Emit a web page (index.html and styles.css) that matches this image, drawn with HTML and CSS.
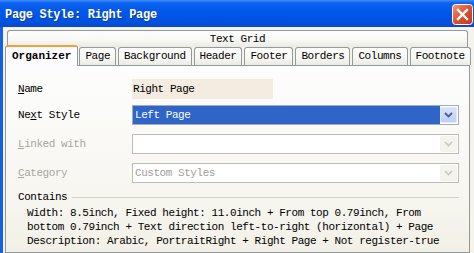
FILE: index.html
```html
<!DOCTYPE html>
<html lang="en">
<head>
    <meta charset="UTF-8">
    <meta name="viewport" content="width=device-width, initial-scale=1.0">
    <title>Page Style: Right Page</title>
    <link rel="stylesheet" href="styles.css">
</head>
<body>
    <div class="window">
        <div class="titlebar">
            <span class="title">Page Style: Right Page</span>
            <span class="close">
                <svg width="21" height="21" viewBox="0 0 21 21">
                    <defs>
                        <linearGradient id="cg" x1="0" y1="0" x2="1" y2="1">
                            <stop offset="0" stop-color="#f29a7c"/>
                            <stop offset="0.5" stop-color="#e0502a"/>
                            <stop offset="1" stop-color="#c4341a"/>
                        </linearGradient>
                    </defs>
                    <rect x="0.5" y="0.5" width="20" height="20" rx="3" fill="url(#cg)" stroke="#fff"/>
                    <path d="M6 6 L15 15 M15 6 L6 15" stroke="#fff" stroke-width="2.4" stroke-linecap="square"/>
                </svg>
            </span>
        </div>
        <div class="body">
            <div class="tabrow back">
                <span class="tab wide">Text Grid</span>
            </div>
            <div class="tabrow front">
                <span class="tab active">Organizer</span>
                <span class="tab">Page</span>
                <span class="tab">Background</span>
                <span class="tab">Header</span>
                <span class="tab">Footer</span>
                <span class="tab">Borders</span>
                <span class="tab">Columns</span>
                <span class="tab">Footnote</span>
            </div>
            <div class="panel">
                <div class="row first">
                    <span class="label"><u>N</u>ame</span>
                    <span class="namebox">Right Page</span>
                </div>
                <div class="row">
                    <span class="label">Ne<u>x</u>t Style</span>
                    <div class="select">
                        <span class="value picked">Left Page</span>
                        <span class="drop">
                            <svg width="9" height="6" viewBox="0 0 9 6"><path d="M1 1 L4.5 4.5 L8 1" fill="none" stroke="#4d6185" stroke-width="1.8"/></svg>
                        </span>
                    </div>
                </div>
                <div class="row">
                    <span class="label off"><u>L</u>inked with</span>
                    <div class="select disabled">
                        <span class="value"></span>
                        <span class="drop">
                            <svg width="9" height="6" viewBox="0 0 9 6"><path d="M1 1 L4.5 4.5 L8 1" fill="none" stroke="#c9c7ba" stroke-width="1.6"/></svg>
                        </span>
                    </div>
                </div>
                <div class="row">
                    <span class="label off"><u>C</u>ategory</span>
                    <div class="select disabled">
                        <span class="value">Custom Styles</span>
                        <span class="drop">
                            <svg width="9" height="6" viewBox="0 0 9 6"><path d="M1 1 L4.5 4.5 L8 1" fill="none" stroke="#c9c7ba" stroke-width="1.6"/></svg>
                        </span>
                    </div>
                </div>
                <div class="contains">
                    <span>Contains</span>
                    <span class="rule"></span>
                </div>
                <p class="desc">Width: 8.5inch, Fixed height: 11.0inch + From top 0.79inch, From<br>bottom 0.79inch + Text direction left-to-right (horizontal) + Page<br>Description: Arabic, PortraitRight + Right Page + Not register-true</p>
            </div>
        </div>
    </div>
</body>
</html>
```

FILE: styles.css
```css
body{
    margin: 0;
    padding: 0;
    background-color: #f1efe5;
}
.window{
    width: 474px;
    height: 253px;
    overflow: hidden;
    display: flex;
    flex-direction: column;
    font-family: "Liberation Mono", "DejaVu Sans Mono", monospace;
    font-size: 11px;
    letter-spacing: -0.45px;
    color: #000;
}
.titlebar{
    height: 27px;
    flex: none;
    display: flex;
    align-items: center;
    padding-top: 2px;
    box-sizing: border-box;
    background: linear-gradient(#3b8ffb 0, #0f62f0 3px, #0058ea 40%, #0052e0 80%, #0a49cc 100%);
}
.title{
    padding-left: 5px;
    color: #fff;
    font-size: 12px;
    font-weight: bold;
    letter-spacing: -0.3px;
    text-shadow: 1px 1px 0 #0b3a9c;
}
.close{
    margin-left: auto;
    margin-right: 1px;
    height: 21px;
}
.body{
    flex: 1;
    display: flex;
    flex-direction: column;
    border-left: 3px solid #1560e4;
    padding: 3px 4px 0 2px;
    background-color: #f5f4ec;
}
.tabrow{
    display: flex;
    height: 17px;
}
.back{
    padding: 0 2px;
}
.front{
    height: 18px;
    align-items: flex-end;
    padding-left: 2px;
    gap: 2px;
}
.tab{
    box-sizing: border-box;
    height: 18px;
    padding: 0 5px;
    border: 1px solid #919b9c;
    border-bottom: none;
    border-radius: 3px 3px 0 0;
    background: linear-gradient(#fefefe, #f7f7f3 60%, #ebeae4);
    line-height: 17px;
    white-space: nowrap;
}
.wide{
    flex: 1;
    height: 17px;
    text-align: center;
    line-height: 16px;
}
.active{
    position: relative;
    z-index: 1;
    height: 21px;
    margin: 0 -1px -1px -2px;
    padding: 0 6px;
    font-weight: bold;
    letter-spacing: 0;
    background: #fcfcfe;
    border-top: 2px solid #f0a33c;
    line-height: 18px;
}
.panel{
    flex: 1;
    border: 1px solid #919b9c;
    padding: 13px 10px 0 12px;
    background: linear-gradient(#fdfdfd, #f7f6f0 70%, #f2f0e6);
}
.row{
    display: flex;
    align-items: center;
    height: 20px;
    margin-top: 9px;
}
.row.first{
    margin-top: 0;
    margin-bottom: -3px;
}
.label{
    width: 114px;
    flex: none;
}
.label.off{
    color: #a8a7a0;
}
.namebox{
    width: 140px;
    height: 20px;
    line-height: 20px;
    padding-left: 1px;
    background-color: #f4ece0;
}
.select{
    flex: 1;
    height: 20px;
    box-sizing: border-box;
    display: flex;
    border: 1px solid #a5acb5;
    background-color: #fff;
    padding: 1px 1px 1px 0;
}
.value{
    flex: 1;
    padding-left: 2px;
    line-height: 16px;
}
.value.picked{
    background-color: #2f64c8;
    color: #fff;
    margin-top: -1px;
    margin-bottom: -1px;
    line-height: 18px;
}
.disabled{
    border-color: #bdbcb6;
}
.disabled .value{
    color: #a0a09a;
}
.drop{
    width: 17px;
    display: flex;
    align-items: center;
    justify-content: center;
    box-sizing: border-box;
    border: 1px solid #dfe8fb;
    border-radius: 2px;
    background: linear-gradient(#d6e2fd, #bdd0f8);
}
.disabled .drop{
    border-color: #f3f2ec;
    background: #f4f3ee;
}
.contains{
    display: flex;
    align-items: center;
    height: 14px;
    margin-top: 7px;
}
.rule{
    flex: 1;
    height: 1px;
    margin-left: 5px;
    background-color: #d3d1c4;
}
.desc{
    margin: 2px 0 0 9px;
    line-height: 14px;
    white-space: nowrap;
}
```
